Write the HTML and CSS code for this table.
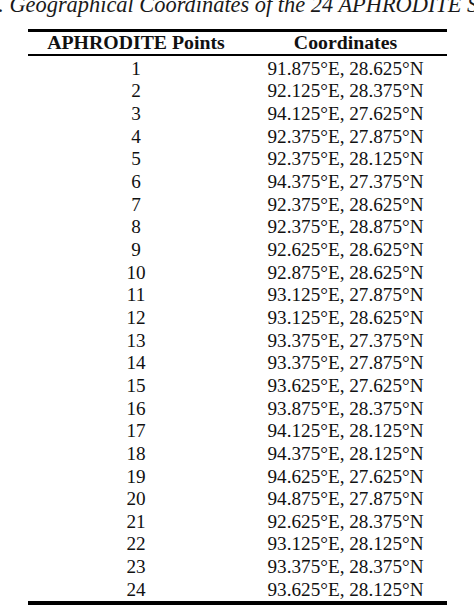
FILE: index.html
```html
<!DOCTYPE html>
<html>
<head>
<meta charset="utf-8">
<link rel="stylesheet" href="styles.css">
</head>
<body>
<div class="page">
  <div class="title">1. Geographical Coordinates of the 24 APHRODITE Stations</div>
  <div class="table">
    <div class="head">
      <div class="c1">APHRODITE Points</div>
      <div class="c2">Coordinates</div>
    </div>
    <div class="body">
      <div class="row"><div class="c1">1</div><div class="c2">91.875°E, 28.625°N</div></div>
      <div class="row"><div class="c1">2</div><div class="c2">92.125°E, 28.375°N</div></div>
      <div class="row"><div class="c1">3</div><div class="c2">94.125°E, 27.625°N</div></div>
      <div class="row"><div class="c1">4</div><div class="c2">92.375°E, 27.875°N</div></div>
      <div class="row"><div class="c1">5</div><div class="c2">92.375°E, 28.125°N</div></div>
      <div class="row"><div class="c1">6</div><div class="c2">94.375°E, 27.375°N</div></div>
      <div class="row"><div class="c1">7</div><div class="c2">92.375°E, 28.625°N</div></div>
      <div class="row"><div class="c1">8</div><div class="c2">92.375°E, 28.875°N</div></div>
      <div class="row"><div class="c1">9</div><div class="c2">92.625°E, 28.625°N</div></div>
      <div class="row"><div class="c1">10</div><div class="c2">92.875°E, 28.625°N</div></div>
      <div class="row"><div class="c1">11</div><div class="c2">93.125°E, 27.875°N</div></div>
      <div class="row"><div class="c1">12</div><div class="c2">93.125°E, 28.625°N</div></div>
      <div class="row"><div class="c1">13</div><div class="c2">93.375°E, 27.375°N</div></div>
      <div class="row"><div class="c1">14</div><div class="c2">93.375°E, 27.875°N</div></div>
      <div class="row"><div class="c1">15</div><div class="c2">93.625°E, 27.625°N</div></div>
      <div class="row"><div class="c1">16</div><div class="c2">93.875°E, 28.375°N</div></div>
      <div class="row"><div class="c1">17</div><div class="c2">94.125°E, 28.125°N</div></div>
      <div class="row"><div class="c1">18</div><div class="c2">94.375°E, 28.125°N</div></div>
      <div class="row"><div class="c1">19</div><div class="c2">94.625°E, 27.625°N</div></div>
      <div class="row"><div class="c1">20</div><div class="c2">94.875°E, 27.875°N</div></div>
      <div class="row"><div class="c1">21</div><div class="c2">92.625°E, 28.375°N</div></div>
      <div class="row"><div class="c1">22</div><div class="c2">93.125°E, 28.125°N</div></div>
      <div class="row"><div class="c1">23</div><div class="c2">93.375°E, 28.375°N</div></div>
      <div class="row"><div class="c1">24</div><div class="c2">93.625°E, 28.125°N</div></div>
    </div>
  </div>
</div>
</body>
</html>
```
FILE: styles.css
```css
html, body {
  margin: 0;
  padding: 0;
  background: #ffffff;
}
body {
  width: 474px;
  height: 605px;
  overflow: hidden;
  font-family: "Liberation Serif", "Times New Roman", serif;
  color: #111;
}
.page {
  display: flex;
  flex-direction: column;
  overflow: hidden;
}
.title {
  margin-top: -5.5px;
  margin-left: -13px;
  font-style: italic;
  font-size: 22.4px;
  line-height: 20px;
  white-space: nowrap;
  color: #1a1a1a;
}
.table {
  margin: 14.5px 0 0 28px;
  width: 419px;
  border-top: 3px solid #000;
  border-bottom: 5px solid #000;
}
.head, .row {
  display: grid;
  grid-template-columns: 216px 203px;
  text-align: center;
}
.head {
  height: 21.5px;
  font-weight: bold;
  font-size: 19.8px;
  line-height: 21.5px;
  border-bottom: 2px solid #000;
}
.body {
  padding-top: 2.2px;
}
.row {
  height: 22.67px;
  font-size: 19.2px;
  line-height: 22.67px;
}
```
